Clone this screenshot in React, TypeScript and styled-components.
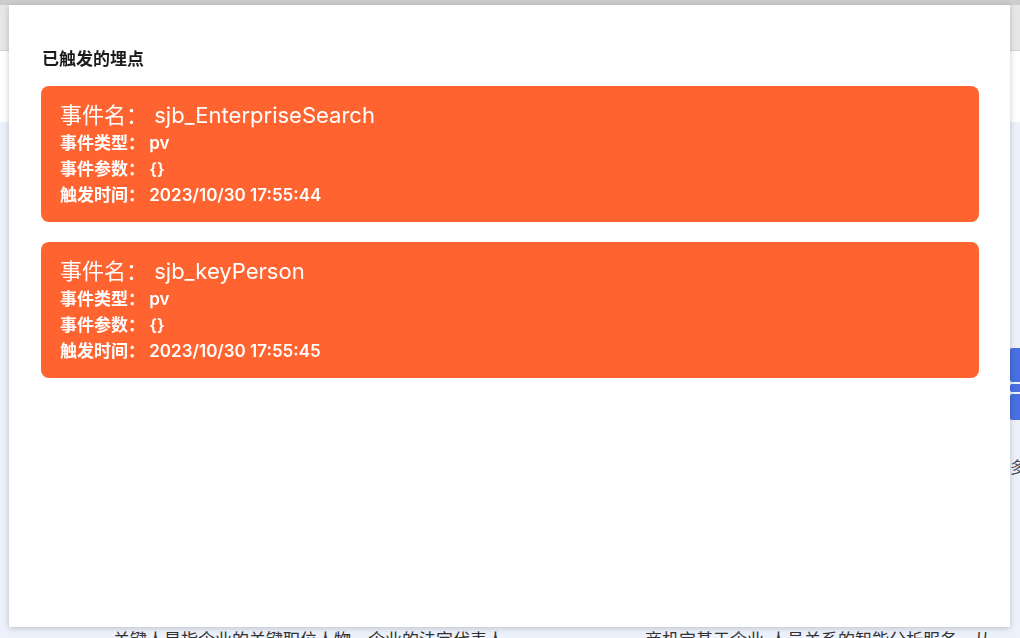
import React from "react";
import styled, { createGlobalStyle } from "styled-components";

const GlobalStyle = createGlobalStyle`
  html, body {
    margin: 0;
    padding: 0;
    width: 1020px;
    height: 638px;
    overflow: hidden;
  }
  body {
    font-family: "Inter", "Noto Sans CJK SC", sans-serif;
  }
  * { box-sizing: border-box; }
`;

/* ---------- background page (behind the popup) ---------- */

const Backdrop = styled.div`
  width: 1020px;
  height: 638px;
  display: flex;
  flex-direction: column;
  background: #ffffff;
`;

const ChromeBar = styled.div`
  height: 5px;
  flex: none;
  background: #cdcdcd;
`;

const SiteHeader = styled.div`
  height: 46px;
  flex: none;
  background: #e7e7e7;
  border-bottom: 1px solid #d2d2d2;
`;

const Banner = styled.div`
  height: 71px;
  flex: none;
  background: #ffffff;
`;

const Content = styled.div`
  flex: 1;
  background: #edf1fb;
  display: flex;
  flex-direction: column;
`;

const ContentBody = styled.div`
  flex: 1;
  display: flex;
  justify-content: flex-end;
`;

const SideColumn = styled.div`
  width: 10px;
  padding-top: 226px;
  display: flex;
  flex-direction: column;
  gap: 2px;
  overflow: hidden;
  font-family: "Noto Sans CJK SC", sans-serif;
`;

const BlueBlock = styled.div<{ $h: number }>`
  height: ${(p) => p.$h}px;
  background: #4a6fe3;
  border-radius: 2px 0 0 2px;
`;

const SideText = styled.div`
  margin-top: 34px;
  font-size: 16px;
  line-height: 20px;
  color: #444;
  white-space: nowrap;
`;

const FooterText = styled.div`
  height: 10px;
  display: flex;
  overflow: visible;
  font-family: "Noto Sans CJK SC", sans-serif;
  font-size: 17px;
  line-height: 22px;
  color: #333;
  white-space: nowrap;
`;

const FooterSpan = styled.span<{ $w: number }>`
  width: ${(p) => p.$w}px;
  flex: none;
`;

/* ---------- popup ---------- */

const Popup = styled.div`
  position: fixed;
  left: 9px;
  top: 5px;
  width: 1001px;
  height: 622px;
  background: #ffffff;
  box-shadow: 0 1px 6px rgba(0, 0, 0, 0.22);
  padding: 42px 31px 0 32px;
  display: flex;
  flex-direction: column;
`;

const Heading = styled.div`
  font-size: 17px;
  line-height: 24px;
  font-weight: 700;
  color: #1c1c1c;
  margin-bottom: 15px;
  padding-left: 1px;
`;

const CardList = styled.div`
  display: flex;
  flex-direction: column;
  gap: 20px;
`;

const Card = styled.div`
  background: #ff6330;
  border-radius: 8px;
  padding: 15px 19px 14px;
  color: #ffffff;
`;

const CardTitle = styled.div`
  font-size: 22px;
  line-height: 29px;
  font-weight: 400;
  white-space: pre;
`;

const CardLine = styled.div`
  font-size: 17px;
  line-height: 26px;
  font-weight: 600;
  white-space: pre;
`;

type EventItem = {
  name: string;
  type: string;
  params: string;
  time: string;
};

const events: EventItem[] = [
  { name: "sjb_EnterpriseSearch", type: "pv", params: "{}", time: "2023/10/30 17:55:44" },
  { name: "sjb_keyPerson", type: "pv", params: "{}", time: "2023/10/30 17:55:45" },
];

export default function App() {
  return (
    <>
      <GlobalStyle />
      <Backdrop>
        <ChromeBar />
        <SiteHeader />
        <Banner />
        <Content>
          <ContentBody>
            <SideColumn>
              <BlueBlock $h={34} />
              <BlueBlock $h={8} />
              <BlueBlock $h={26} />
              <SideText>多</SideText>
            </SideColumn>
          </ContentBody>
          <FooterText>
            <FooterSpan $w={113} />
            <FooterSpan $w={532}>关键人是指企业的关键职位人物，企业的法定代表人</FooterSpan>
            <span>商机宝基于企业-人员关系的智能分析服务。从</span>
          </FooterText>
        </Content>
      </Backdrop>
      <Popup>
        <Heading>已触发的埋点</Heading>
        <CardList>
          {events.map((e) => (
            <Card key={e.name}>
              <CardTitle>{`事件名： ${e.name}`}</CardTitle>
              <CardLine>{`事件类型： ${e.type}`}</CardLine>
              <CardLine>{`事件参数： ${e.params}`}</CardLine>
              <CardLine>{`触发时间： ${e.time}`}</CardLine>
            </Card>
          ))}
        </CardList>
      </Popup>
    </>
  );
}
